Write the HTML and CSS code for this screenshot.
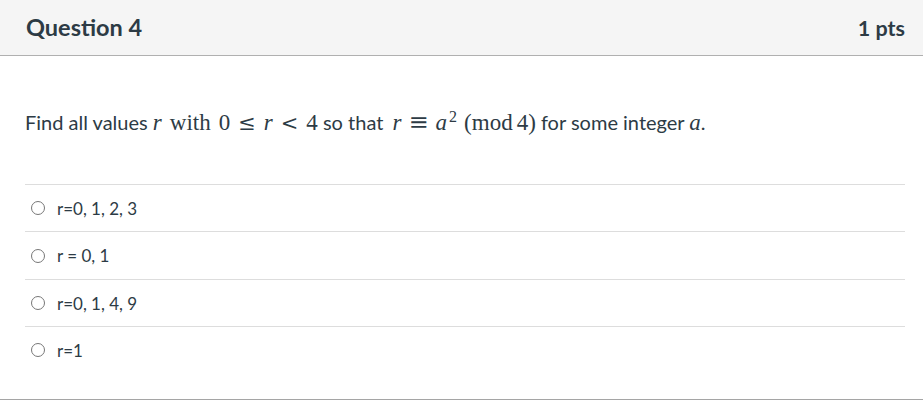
FILE: index.html
```html
<!DOCTYPE html>
<html>
<head>
<meta charset="utf-8">
<link rel="stylesheet" href="styles.css">
</head>
<body>
<div class="question">
  <div class="q-header">
    <h2 class="q-title">Question 4</h2>
    <span class="q-points">1 pts</span>
  </div>
  <div class="q-body">
    <p class="q-text">Find all values <span class="mi">r</span><span class="mrm gap-l">with</span><span class="mn gap-l">0</span><span class="mo">≤</span><span class="mi">r</span><span class="mo">&lt;</span><span class="mn">4</span> so that <span class="mi gap-s">r</span><span class="mo eq">≡</span><span class="mi">a</span><sup class="msup">2</sup><span class="mrm gap-m">(mod</span><span class="mrm sp">4)</span> for some integer <span class="mi">a</span>.</p>
    <div class="answers">
      <label class="answer"><span class="radio"></span><span class="a-text">r=0, 1, 2, 3</span></label>
      <label class="answer"><span class="radio"></span><span class="a-text">r = 0, 1</span></label>
      <label class="answer"><span class="radio"></span><span class="a-text">r=0, 1, 4, 9</span></label>
      <label class="answer"><span class="radio"></span><span class="a-text">r=1</span></label>
    </div>
  </div>
</div>
</body>
</html>
```

FILE: styles.css
```css
html, body {
  margin: 0;
  padding: 0;
  background: #ffffff;
}
body {
  font-family: Lato, "Open Sans", sans-serif;
  color: #2d3b45;
}
.question {
  border-bottom: 1px solid #a5a5a5;
}
.q-header {
  display: flex;
  justify-content: space-between;
  align-items: center;
  height: 55px;
  padding: 0 18px 0 26px;
  background: #f5f5f5;
  border-bottom: 1px solid #b0b0b0;
}
.q-title {
  margin: 0 0 1px 0;
  font-size: 23.5px;
  font-weight: 700;
  color: #2d3b45;
}
.q-points {
  font-size: 21.5px;
  font-weight: 700;
  color: #2d3b45;
}
.q-body {
  padding: 0 18px 0 25px;
}
.q-text {
  margin: 0;
  padding-top: 51px;
  font-size: 20px;
  line-height: 30px;
  height: 77px;
}
.mi {
  font-family: "Liberation Serif", "DejaVu Serif", serif;
  font-style: italic;
  font-size: 23px;
}
.mn, .mrm {
  font-family: "Liberation Serif", "DejaVu Serif", serif;
  font-size: 23px;
}
.gap-l {
  margin-left: 8px;
}
.gap-s {
  margin-left: 4px;
}
.gap-m {
  margin-left: 7px;
}
.mrm.sp {
  margin-left: 4px;
}
.mo {
  font-family: "DejaVu Serif", "Liberation Serif", serif;
  font-size: 21px;
  margin: 0 8px;
}
.mo.eq {
  font-size: 24px;
  margin: 0 7px;
}
.msup {
  font-family: "Liberation Serif", serif;
  font-size: 16px;
  line-height: 0;
  margin-left: 2px;
}
.answers {
  display: flex;
  flex-direction: column;
  padding-bottom: 26px;
}
.answer {
  display: flex;
  align-items: center;
  height: 47px;
  box-sizing: border-box;
  border-top: 1px solid #dddddd;
  font-size: 17px;
}
.answer:nth-child(2) {
  height: 48px;
}
.radio {
  width: 12px;
  height: 12px;
  border: 1.5px solid #777777;
  border-radius: 50%;
  margin-left: 6px;
  margin-right: 12px;
  flex: none;
}
.a-text {
  color: #2d3b45;
}
```
